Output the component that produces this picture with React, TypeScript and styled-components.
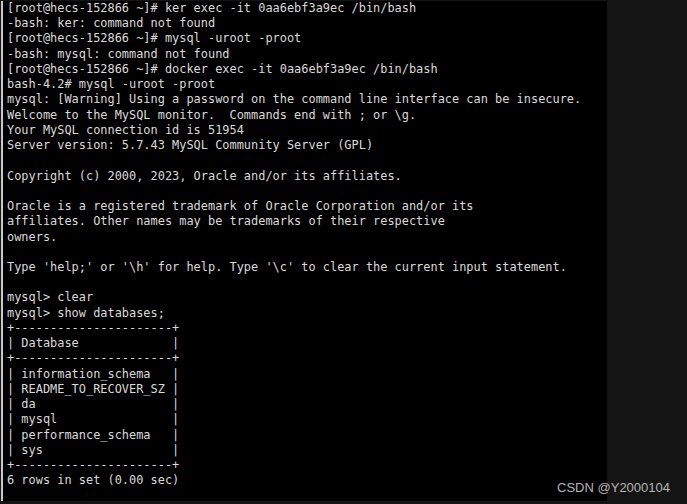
import React from "react";
import styled, { createGlobalStyle } from "styled-components";

const Global = createGlobalStyle`
  html, body { margin: 0; padding: 0; background: #141414; }
  #root { width: 687px; height: 504px; }
`;

const Page = styled.div`
  position: relative;
  width: 687px;
  height: 504px;
  box-sizing: border-box;
  padding: 1px 0 0 1px;
  background: #141414;
  overflow: hidden;
`;

const Terminal = styled.pre`
  margin: 0;
  width: 600px;
  height: 500px;
  box-sizing: content-box;
  border-left: 2px solid #c9c9c9;
  background: #000;
  color: #dadada;
  font-family: "DejaVu Sans Mono", "Liberation Mono", monospace;
  font-size: 11.93px;
  line-height: 15.23px;
  padding: 0 0 0 4px;
  overflow: hidden;
  white-space: pre;
`;

const Watermark = styled.div`
  position: absolute;
  right: 17px;
  bottom: 9px;
  font-family: "Liberation Sans", Arial, sans-serif;
  font-size: 13px;
  line-height: 15px;
  color: #b5b5b5;
`;

const lines = [
  "[root@hecs-152866 ~]# ker exec -it 0aa6ebf3a9ec /bin/bash",
  "-bash: ker: command not found",
  "[root@hecs-152866 ~]# mysql -uroot -proot",
  "-bash: mysql: command not found",
  "[root@hecs-152866 ~]# docker exec -it 0aa6ebf3a9ec /bin/bash",
  "bash-4.2# mysql -uroot -proot",
  "mysql: [Warning] Using a password on the command line interface can be insecure.",
  "Welcome to the MySQL monitor.  Commands end with ; or \\g.",
  "Your MySQL connection id is 51954",
  "Server version: 5.7.43 MySQL Community Server (GPL)",
  "",
  "Copyright (c) 2000, 2023, Oracle and/or its affiliates.",
  "",
  "Oracle is a registered trademark of Oracle Corporation and/or its",
  "affiliates. Other names may be trademarks of their respective",
  "owners.",
  "",
  "Type 'help;' or '\\h' for help. Type '\\c' to clear the current input statement.",
  "",
  "mysql> clear",
  "mysql> show databases;",
  "+----------------------+",
  "| Database             |",
  "+----------------------+",
  "| information_schema   |",
  "| README_TO_RECOVER_SZ |",
  "| da                   |",
  "| mysql                |",
  "| performance_schema   |",
  "| sys                  |",
  "+----------------------+",
  "6 rows in set (0.00 sec)",
];

export default function App() {
  return (
    <Page>
      <Global />
      <Terminal>{lines.join("\n")}</Terminal>
      <Watermark>CSDN @Y2000104</Watermark>
    </Page>
  );
}
